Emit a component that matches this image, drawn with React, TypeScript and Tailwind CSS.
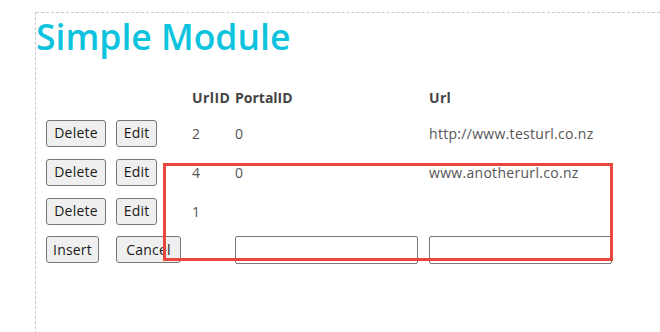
import React from "react";

const font = { fontFamily: '"Open Sans", "DejaVu Sans", sans-serif' };

function Btn({ children, w }: { children: React.ReactNode; w: string }) {
  return (
    <button className={`h-[27px] ${w} bg-[#efefef] border border-[#767676] rounded-[3px] text-[14px] text-[#1a1a1a] leading-none tracking-[0.2px]`}>
      {children}
    </button>
  );
}

export default function App() {
  const rows = [
    { id: "2", portal: "0", url: "http://www.testurl.co.nz" },
    { id: "4", portal: "0", url: "www.anotherurl.co.nz" },
    { id: "1", portal: "", url: "" },
  ];
  return (
    <div className="relative w-[660px] h-[332px] bg-white overflow-hidden" style={font}>
      <div className="ml-[35px] h-full border-l border-dashed border-[#c8c8c8]">
        <div className="mt-[12px] border-t border-dashed border-[#c8c8c8]">
          <h1 className="text-[35.5px] font-semibold text-[#0ec3dd] leading-none pt-[6px]">
            Simple Module
          </h1>
          <div className="mt-[28px] ml-[10px] grid grid-cols-[146px_43px_194px_1fr] text-[14px] text-[#555] tracking-[0.3px]">
            <div className="h-[29px]" />
            <div className="h-[29px] flex items-center font-bold text-[#444] tracking-[0.4px]">UrlID</div>
            <div className="h-[29px] flex items-center font-bold text-[#444] tracking-normal">PortalID</div>
            <div className="h-[29px] flex items-center font-bold text-[#444]">Url</div>
            {rows.map((r) => (
              <React.Fragment key={r.id}>
                <div className="h-[39px] flex items-center gap-[10px] pt-[4px]">
                  <Btn w="w-[60px]">Delete</Btn>
                  <Btn w="w-[41px]">Edit</Btn>
                </div>
                <div className="h-[39px] flex items-center pt-[4px]">{r.id}</div>
                <div className="h-[39px] flex items-center pt-[4px]">{r.portal}</div>
                <div className="h-[39px] flex items-center pt-[4px]">{r.url}</div>
              </React.Fragment>
            ))}
            <div className="h-[38px] flex items-center gap-[17px] pt-[4px]">
              <Btn w="w-[53px]">Insert</Btn>
              <Btn w="w-[65px]">Cancel</Btn>
            </div>
            <div className="h-[38px]" />
            <div className="h-[38px] flex items-center pt-[4px]">
              <input className="w-[183px] h-[28px] border border-[#767676] rounded-[2px]" />
            </div>
            <div className="h-[38px] flex items-center pt-[4px]">
              <input className="w-[183px] h-[28px] border border-[#767676] rounded-[2px]" />
            </div>
          </div>
        </div>
      </div>
      <div className="absolute left-[163px] top-[163px] w-[450px] h-[98px] border-[3px] border-[#e8473f]" />
    </div>
  );
}
